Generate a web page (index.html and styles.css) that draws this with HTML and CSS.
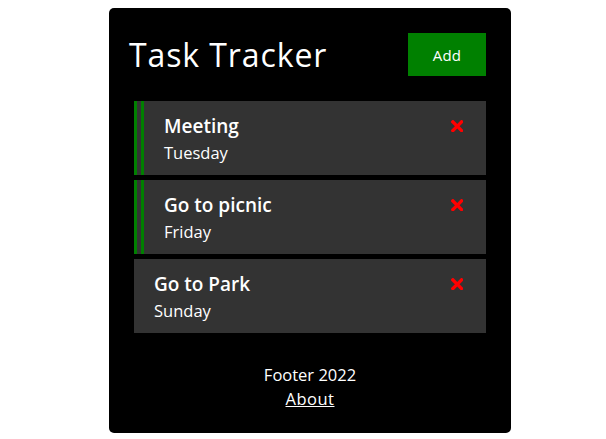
FILE: index.html
```html
<!DOCTYPE html>
<html lang="en">
<head>
<meta charset="utf-8">
<title>Task Tracker</title>
<link rel="stylesheet" href="styles.css">
</head>
<body>
<div class="container">
  <header class="header">
    <h1>Task Tracker</h1>
    <button class="btn">Add</button>
  </header>
  <div class="tasks">
    <div class="task reminder">
      <h3>Meeting <svg class="del" viewBox="0 80 352 352" aria-hidden="true"><path d="M242.72 256l100.07-100.07c12.28-12.28 12.28-32.19 0-44.48l-22.24-22.24c-12.28-12.28-32.19-12.28-44.48 0L176 189.28 75.93 89.21c-12.28-12.28-32.19-12.28-44.48 0L9.21 111.45c-12.28 12.28-12.28 32.19 0 44.48L109.28 256 9.21 356.07c-12.28 12.28-12.28 32.19 0 44.48l22.24 22.24c12.28 12.28 32.2 12.28 44.48 0L176 322.72l100.07 100.07c12.28 12.28 32.2 12.28 44.48 0l22.24-22.24c12.28-12.28 12.28-32.19 0-44.48L242.72 256z"/></svg></h3>
      <p>Tuesday</p>
    </div>
    <div class="task reminder">
      <h3>Go to picnic <svg class="del" viewBox="0 80 352 352" aria-hidden="true"><path d="M242.72 256l100.07-100.07c12.28-12.28 12.28-32.19 0-44.48l-22.24-22.24c-12.28-12.28-32.19-12.28-44.48 0L176 189.28 75.93 89.21c-12.28-12.28-32.19-12.28-44.48 0L9.21 111.45c-12.28 12.28-12.28 32.19 0 44.48L109.28 256 9.21 356.07c-12.28 12.28-12.28 32.19 0 44.48l22.24 22.24c12.28 12.28 32.2 12.28 44.48 0L176 322.72l100.07 100.07c12.28 12.28 32.2 12.28 44.48 0l22.24-22.24c12.28-12.28 12.28-32.19 0-44.48L242.72 256z"/></svg></h3>
      <p>Friday</p>
    </div>
    <div class="task">
      <h3>Go to Park <svg class="del" viewBox="0 80 352 352" aria-hidden="true"><path d="M242.72 256l100.07-100.07c12.28-12.28 12.28-32.19 0-44.48l-22.24-22.24c-12.28-12.28-32.19-12.28-44.48 0L176 189.28 75.93 89.21c-12.28-12.28-32.19-12.28-44.48 0L9.21 111.45c-12.28 12.28-12.28 32.19 0 44.48L109.28 256 9.21 356.07c-12.28 12.28-12.28 32.19 0 44.48l22.24 22.24c12.28 12.28 32.2 12.28 44.48 0L176 322.72l100.07 100.07c12.28 12.28 32.2 12.28 44.48 0l22.24-22.24c12.28-12.28 12.28-32.19 0-44.48L242.72 256z"/></svg></h3>
      <p>Sunday</p>
    </div>
  </div>
  <footer class="footer">
    <p>Footer 2022</p>
    <a href="#">About</a>
  </footer>
</div>
</body>
</html>
```

FILE: styles.css
```css
* {
  box-sizing: border-box;
  margin: 0;
  padding: 0;
}

body {
  font-family: "Open Sans", "Liberation Sans", sans-serif;
  background: #fff;
}

.container {
  width: 402px;
  margin: 8px 0 0 109px;
  padding: 20px 20px 22px;
  background: #000;
  color: #fff;
  border-radius: 5px;
}

.header {
  display: flex;
  justify-content: space-between;
  align-items: center;
  margin-bottom: 20px;
}

.header h1 {
  font-size: 32px;
  font-weight: 400;
  line-height: 48px;
  letter-spacing: 0.9px;
}

.btn {
  width: 78px;
  height: 43px;
  margin: 5px;
  border: none;
  background: #008000;
  color: #fff;
  font-family: "Open Sans", "Liberation Sans", sans-serif;
  font-size: 15px;
  letter-spacing: 0.2px;
}

.task {
  margin: 5px;
  padding: 10px 20px;
  background: #333;
}

.task.reminder {
  border-left: 10px double #008000;
}

.task h3 {
  display: flex;
  justify-content: space-between;
  align-items: center;
  font-size: 19px;
  line-height: 30px;
  font-weight: 600;
}

.task p {
  font-size: 16.5px;
  line-height: 24px;
}

.del {
  width: 12.5px;
  height: 12.5px;
  margin-right: 3px;
  fill: #f00;
}

.footer {
  margin-top: 30px;
  text-align: center;
  font-size: 16.5px;
  line-height: 24px;
}

.footer a {
  color: #fff;
  letter-spacing: 0.5px;
}
```
